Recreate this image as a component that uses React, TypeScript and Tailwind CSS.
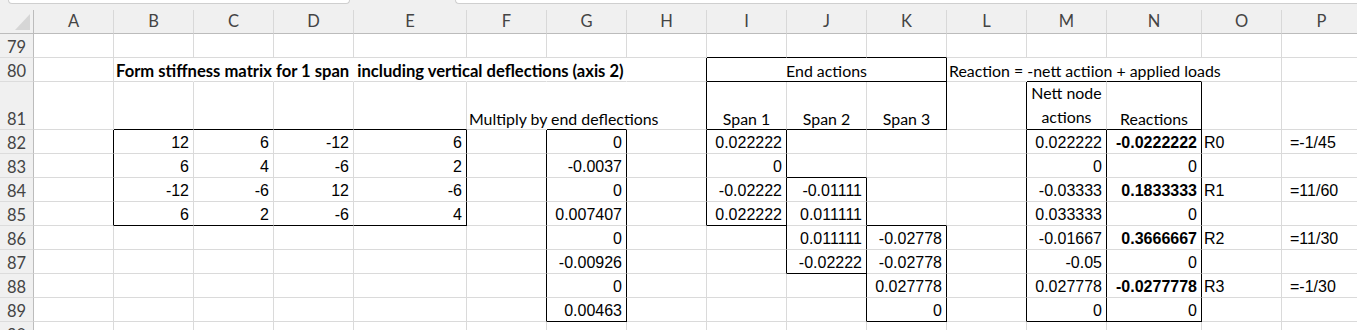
import React from "react";

type Align = "l" | "r" | "c";
type CellDef = { t: string; a: Align; bold?: boolean; ui?: boolean; wrap?: boolean };

const COLS = ["A", "B", "C", "D", "E", "F", "G", "H", "I", "J", "K", "L", "M", "N", "O", "P"];
const ROWS = [79, 80, 81, 82, 83, 84, 85, 86, 87, 88, 89, 90];

// Ranges outlined with a thin black border: [firstCol, firstRow, lastCol, lastRow]
const BOXES: [number, number, number, number][] = [
  [1, 82, 4, 85],
  [6, 82, 6, 89],
  [8, 80, 10, 80],
  [8, 81, 10, 81],
  [8, 82, 8, 85],
  [9, 84, 9, 87],
  [10, 86, 10, 89],
  [12, 81, 13, 81],
  [12, 82, 12, 89],
  [13, 82, 13, 89],
];

// Gridlines hidden behind text that spills into the next cells
const HIDDEN_RIGHT: Record<number, number[]> = {
  80: [1, 2, 3, 4, 5, 6, 11, 12, 13],
  81: [5, 6],
};

const ui = (t: string, a: Align = "c", extra: Partial<CellDef> = {}): CellDef => ({ t, a, ui: true, ...extra });
const n = (t: string, bold = false): CellDef => ({ t, a: "r", bold });
const lbl = (t: string): CellDef => ({ t, a: "l" });

const DATA: Record<string, CellDef> = {
  B80: ui("Form stiffness matrix for 1 span  including vertical deflections (axis 2)", "l", { bold: true }),
  I80: ui("End actions"),
  L80: ui("Reaction = -nett actiion + applied loads", "l"),
  F81: ui("Multiply by end deflections", "l"),
  I81: ui("Span 1"),
  J81: ui("Span 2"),
  K81: ui("Span 3"),
  M81: ui("Nett node actions", "c", { wrap: true }),
  N81: ui("Reactions"),

  B82: n("12"), C82: n("6"), D82: n("-12"), E82: n("6"), G82: n("0"), I82: n("0.022222"),
  M82: n("0.022222"), N82: n("-0.0222222", true), O82: lbl("R0"), P82: { t: "=-1/45", a: "l" },

  B83: n("6"), C83: n("4"), D83: n("-6"), E83: n("2"), G83: n("-0.0037"), I83: n("0"),
  M83: n("0"), N83: n("0"),

  B84: n("-12"), C84: n("-6"), D84: n("12"), E84: n("-6"), G84: n("0"), I84: n("-0.02222"),
  J84: n("-0.01111"), M84: n("-0.03333"), N84: n("0.1833333", true), O84: lbl("R1"), P84: { t: "=11/60", a: "l" },

  B85: n("6"), C85: n("2"), D85: n("-6"), E85: n("4"), G85: n("0.007407"), I85: n("0.022222"),
  J85: n("0.011111"), M85: n("0.033333"), N85: n("0"),

  G86: n("0"), J86: n("0.011111"), K86: n("-0.02778"), M86: n("-0.01667"), N86: n("0.3666667", true),
  O86: lbl("R2"), P86: { t: "=11/30", a: "l" },

  G87: n("-0.00926"), J87: n("-0.02222"), K87: n("-0.02778"), M87: n("-0.05"), N87: n("0"),

  G88: n("0"), K88: n("0.027778"), M88: n("0.027778"), N88: n("-0.0277778", true),
  O88: lbl("R3"), P88: { t: "=-1/30", a: "l" },

  G89: n("0.00463"), K89: n("0"), M89: n("0"), N89: n("0"),
};

function blackRight(c: number, r: number) {
  return BOXES.some(([c1, r1, c2, r2]) => r >= r1 && r <= r2 && (c === c2 || c + 1 === c1));
}
function blackBottom(c: number, r: number) {
  return BOXES.some(([c1, r1, c2, r2]) => c >= c1 && c <= c2 && (r === r2 || r + 1 === r1));
}

function Cell({ c, r, span }: { c: number; r: number; span?: boolean }) {
  const key = `${COLS[c]}${r}`;
  const d = DATA[key];
  const lastCol = span ? c + 2 : c;
  const right = blackRight(lastCol, r)
    ? "border-r-black"
    : HIDDEN_RIGHT[r]?.includes(c)
    ? "border-r-transparent"
    : "border-r-[#dadada]";
  const bottom = blackBottom(c, r) ? "border-b-black" : "border-b-[#dadada]";

  let justify = "justify-end pr-[4px]";
  if (d?.a === "l") justify = key.startsWith("P") ? "justify-start pl-[8px]" : "justify-start pl-[2px]";
  if (d?.a === "c") justify = "justify-center";

  let font = "font-['Liberation_Sans','Arial',sans-serif] text-[16px]";
  if (d?.ui) {
    font = d.bold
      ? "font-['Lato','Liberation_Sans',sans-serif] text-[16.6px]"
      : "font-['Lato','Liberation_Sans',sans-serif] text-[15.9px]";
  }

  return (
    <div
      className={`flex items-end border-r border-b ${right} ${bottom} ${justify} ${span ? "col-span-3" : ""} ${
        d?.wrap ? "pb-0" : "pb-[1px]"
      } min-w-0 overflow-visible text-black`}
    >
      {d &&
        (d.wrap ? (
          <span className={`${font} leading-[24px] text-center whitespace-normal`}>{d.t}</span>
        ) : (
          <span className={`${font} leading-[18px] whitespace-pre ${d.bold ? "font-bold" : "font-normal"}`}>
            {d.t}
          </span>
        ))}
    </div>
  );
}

function RowHeader({ r }: { r: number }) {
  return (
    <div className="flex items-end justify-center pb-[1px] bg-[#f0f0f0] border-r border-r-[#bcbcbc] border-b border-b-[#dcdcdc] font-['Lato','Liberation_Sans',sans-serif] text-[16.5px] leading-[18px] text-[#444444]">
      {r}
    </div>
  );
}

export default function App() {
  return (
    <div className="w-[1357px] h-[330px] overflow-hidden bg-white">
      {/* remnant of the formula bar above the sheet */}
      <div className="h-[10px] bg-[#f0f0f0] flex items-start pl-[8px] gap-[105px]">
        <div className="w-[342px] h-[4px] bg-white border-x border-b border-[#cfcfcf] rounded-b-[5px]" />
        <div className="flex-1 h-[4px] bg-white border-l border-b border-[#cfcfcf] rounded-bl-[5px]" />
      </div>
      <div className="grid grid-cols-[34px_80px_80px_80px_80px_113px_80px_80px_80px_80px_80px_80px_80px_80px_95px_80px_80px] grid-rows-[24px_24px_24px_48px_24px_24px_24px_24px_24px_24px_24px_24px_24px] w-[1362px]">
        {/* corner */}
        <div className="bg-[#f0f0f0] border-r border-b border-r-[#bcbcbc] border-b-[#bcbcbc] flex items-end justify-end pr-[3px] pb-[3px]">
          <svg width="15" height="16" viewBox="0 0 15 16">
            <polygon points="15,0 15,16 0,16" fill="#d6d6d6" />
          </svg>
        </div>
        {COLS.map((c) => (
          <div
            key={c}
            className="bg-[#f0f0f0] border-b border-b-[#bcbcbc] border-r border-r-[#d8d8d8] flex items-center justify-center font-['Lato','Liberation_Sans',sans-serif] text-[16.5px] text-[#444444]"
          >
            {c}
          </div>
        ))}
        {ROWS.map((r) => (
          <React.Fragment key={r}>
            <RowHeader r={r} />
            {COLS.map((_, c) => {
              if (r === 80 && (c === 9 || c === 10)) return null;
              return <Cell key={c} c={c} r={r} span={r === 80 && c === 8} />;
            })}
          </React.Fragment>
        ))}
      </div>
    </div>
  );
}
